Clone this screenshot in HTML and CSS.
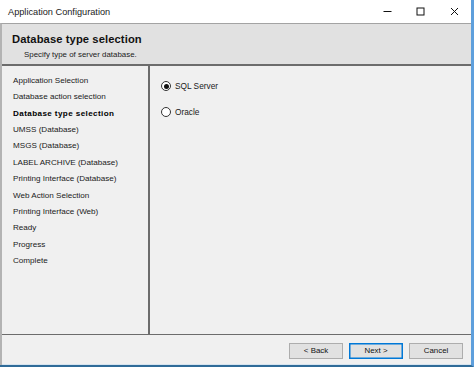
FILE: index.html
```html
<!DOCTYPE html>
<html>
<head>
<meta charset="utf-8">
<link rel="stylesheet" href="styles.css">
</head>
<body>
<div class="window">
  <div class="titlebar">
    <div class="title">Application Configuration</div>
    <div class="controls">
      <div class="ctl"><svg width="9" height="9" viewBox="0 0 9 9"><line x1="0.5" y1="4.5" x2="8.5" y2="4.5" stroke="#111" stroke-width="1"/></svg></div>
      <div class="ctl"><svg width="9" height="9" viewBox="0 0 9 9"><rect x="1" y="1" width="7" height="7" fill="none" stroke="#111" stroke-width="1"/></svg></div>
      <div class="ctl"><svg width="9" height="9" viewBox="0 0 9 9"><path d="M1 1 L8 8 M8 1 L1 8" stroke="#111" stroke-width="1"/></svg></div>
    </div>
  </div>
  <div class="frame">
    <div class="header">
      <div class="h-title">Database type selection</div>
      <div class="h-sub">Specify type of server database.</div>
    </div>
    <div class="body">
      <div class="steps">
        <div class="step">Application Selection</div>
        <div class="step">Database action selection</div>
        <div class="step active">Database type selection</div>
        <div class="step">UMSS (Database)</div>
        <div class="step">MSGS (Database)</div>
        <div class="step">LABEL ARCHIVE (Database)</div>
        <div class="step">Printing Interface (Database)</div>
        <div class="step">Web Action Selection</div>
        <div class="step">Printing Interface (Web)</div>
        <div class="step">Ready</div>
        <div class="step">Progress</div>
        <div class="step">Complete</div>
      </div>
      <div class="content">
        <div class="radio-row"><span class="radio checked"></span><span class="rlabel">SQL Server</span></div>
        <div class="radio-row"><span class="radio"></span><span class="rlabel">Oracle</span></div>
      </div>
    </div>
    <div class="footer">
      <div class="btn">&lt; Back</div>
      <div class="btn primary">Next &gt;</div>
      <div class="btn">Cancel</div>
    </div>
  </div>
</div>
</body>
</html>
```

FILE: styles.css
```css
html, body {
  margin: 0;
  padding: 0;
  background: #ffffff;
}
body {
  width: 474px;
  height: 367px;
  overflow: hidden;
  font-family: "Liberation Sans", Arial, sans-serif;
  color: #111;
}
.window {
  width: 474px;
  height: 367px;
  box-sizing: border-box;
  border-right: 3px solid #5e9fdc;
  border-bottom: 2px solid #2f6b98;
  display: flex;
  flex-direction: column;
  background: #fff;
}
.titlebar {
  height: 23px;
  flex: 0 0 23px;
  display: flex;
  align-items: center;
  background: #ffffff;
}
.title {
  flex: 1;
  padding-left: 8px;
  font-size: 9.2px;
  color: #1a1a1a;
}
.controls {
  display: flex;
  height: 23px;
}
.ctl {
  width: 33.5px;
  display: flex;
  align-items: center;
  justify-content: center;
}
.frame {
  flex: 1;
  display: flex;
  flex-direction: column;
  border-left: 2px solid #b3b3b3;
  border-top: 1px solid #a3a3a3;
  background: #f0f0f0;
}
.header {
  height: 42px;
  flex: 0 0 42px;
  background: #e1e1e1;
  border-bottom: 2px solid #6c6c6c;
  box-sizing: border-box;
  padding-left: 10px;
  padding-top: 9px;
}
.h-title {
  font-size: 11.2px;
  font-weight: bold;
  letter-spacing: 0.1px;
  line-height: 13px;
  color: #111;
}
.h-sub {
  font-size: 7.9px;
  line-height: 12px;
  padding-left: 12px;
  margin-top: 3px;
  color: #222;
}
.body {
  flex: 1;
  display: flex;
  border-bottom: 1px solid #6c6c6c;
}
.steps {
  width: 148px;
  flex: 0 0 148px;
  border-right: 2px solid #6c6c6c;
  padding-left: 11px;
  padding-top: 7px;
  box-sizing: border-box;
}
.step {
  font-size: 8.1px;
  line-height: 16.36px;
  height: 16.36px;
  color: #1a1a1a;
  white-space: nowrap;
}
.step.active {
  font-weight: bold;
  letter-spacing: 0.4px;
  color: #000;
}
.content {
  flex: 1;
  padding-left: 11px;
  padding-top: 13px;
}
.radio-row {
  display: flex;
  align-items: center;
  height: 14px;
  margin-bottom: 12px;
}
.radio {
  width: 10px;
  height: 10px;
  box-sizing: border-box;
  border: 1px solid #333;
  border-radius: 50%;
  background: #fff;
  display: flex;
  align-items: center;
  justify-content: center;
  margin-right: 4px;
}
.radio.checked::after {
  content: "";
  width: 5px;
  height: 5px;
  border-radius: 50%;
  background: #111;
}
.rlabel {
  font-size: 8.3px;
  color: #1a1a1a;
}
.footer {
  height: 30px;
  flex: 0 0 30px;
  display: flex;
  justify-content: flex-end;
  align-items: flex-start;
  gap: 6px;
  padding-top: 8px;
  padding-right: 8px;
  box-sizing: border-box;
  border-bottom: 1px solid #d6e4f0;
}
.btn {
  width: 54px;
  height: 16px;
  box-sizing: border-box;
  background: #e1e1e1;
  border: 1px solid #adadad;
  font-size: 7.9px;
  line-height: 14px;
  text-align: center;
  color: #111;
}
.btn.primary {
  border: 1px solid #0078d7;
  box-shadow: inset 0 0 0 0.5px #0078d7;
}
```
